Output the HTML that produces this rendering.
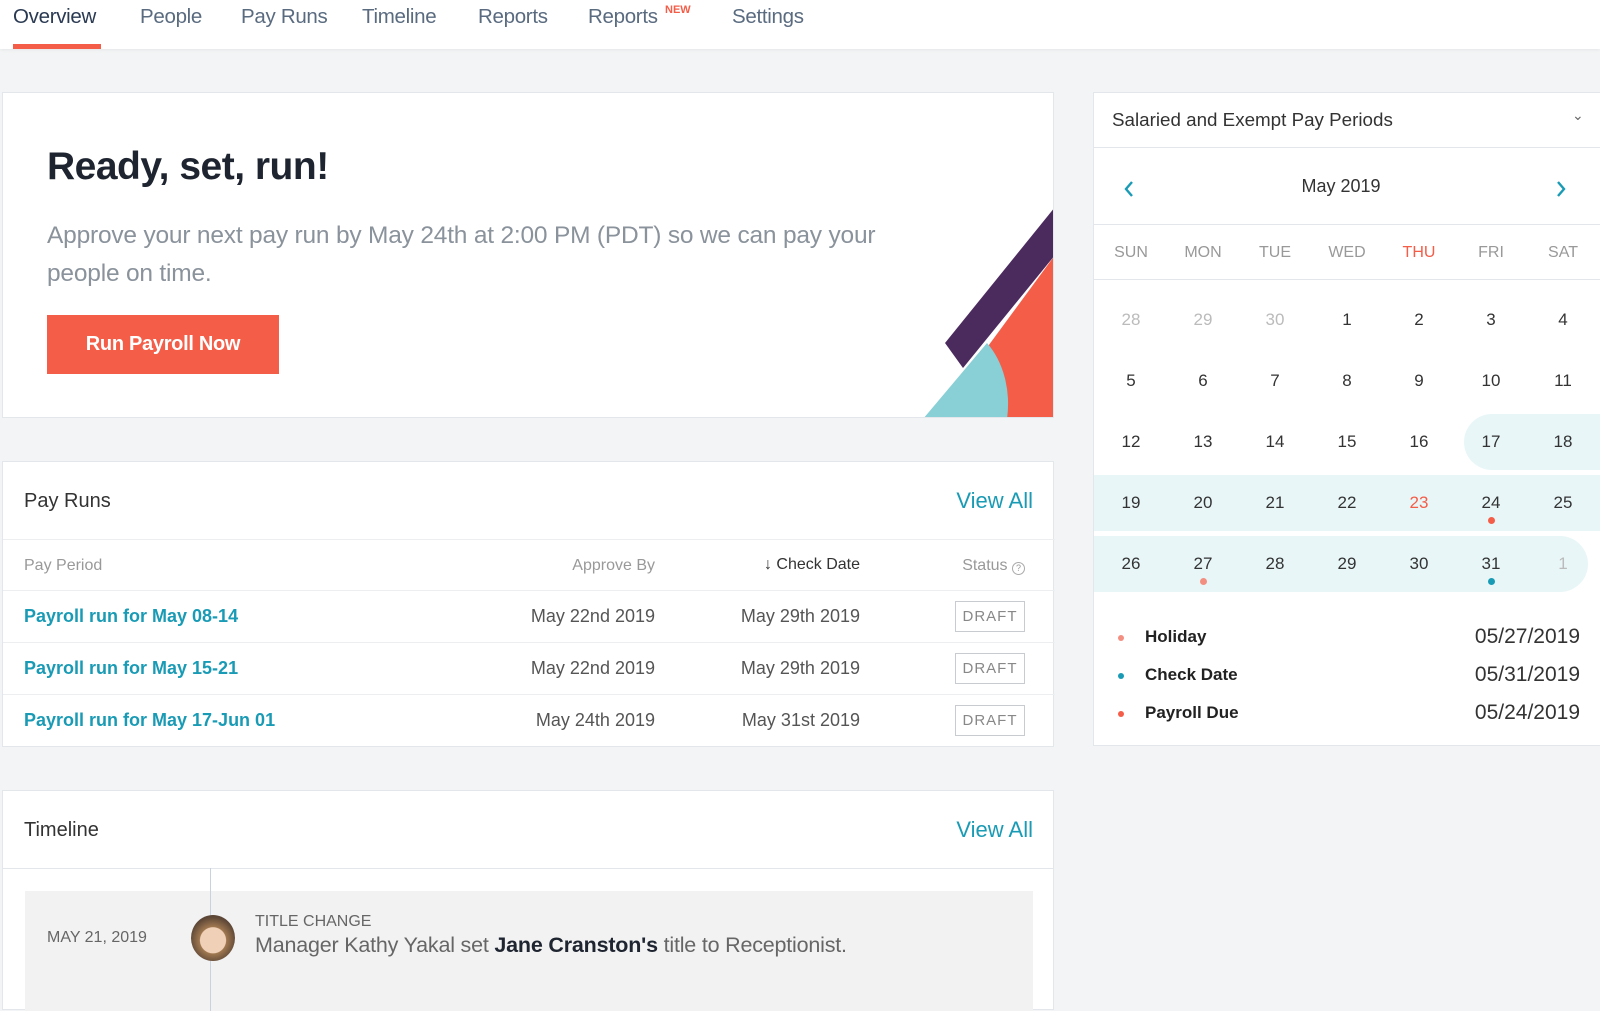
<!DOCTYPE html>
<html><head><meta charset="utf-8"><style>
*{margin:0;padding:0;box-sizing:border-box}
body{width:1600px;height:972px;overflow:hidden;background:#f3f4f5;font-family:"Liberation Sans",sans-serif;position:relative;color:#2b2d33}
.a{position:absolute;white-space:nowrap}
.nav{position:absolute;left:0;top:0;width:1600px;height:49px;background:#fff;box-shadow:0 1px 3px rgba(0,0,0,.06)}
.nav span{position:absolute;top:5px;font-size:20.5px;color:#5a6b80;letter-spacing:-.3px}
.card{position:absolute;background:#fff;border:1px solid #e3e6ea}
.teal{color:#1a9bb5}
.row{position:absolute;left:0;width:1052px;height:52px;border-top:1px solid #eceef0}
.row .a{top:15px;font-size:18px}
.draft{position:absolute;left:952px;top:10px;width:70px;height:31px;border:1px solid #c8ccd0;font-size:15px;color:#888;text-align:center;line-height:29px;letter-spacing:1px}
.cd{position:absolute;width:72px;text-align:center;font-size:17px;color:#333}
</style></head><body>
<div class="nav">
<span style="left:13px;color:#2a3a52">Overview</span>
<span style="left:140px">People</span>
<span style="left:241px">Pay Runs</span>
<span style="left:362px">Timeline</span>
<span style="left:478px">Reports</span>
<span style="left:588px">Reports</span><span style="left:665px;top:4px;font-size:11px;color:#f45d48;font-weight:bold;letter-spacing:0">NEW</span>
<span style="left:732px">Settings</span>
<div style="position:absolute;left:13px;top:44px;width:88px;height:5px;background:#f45d48"></div>
</div>

<div class="card" style="left:2px;top:92px;width:1052px;height:326px;overflow:hidden">
<div class="a" style="left:44px;top:52px;font-size:39px;font-weight:bold;color:#1f2530;letter-spacing:-.5px">Ready, set, run!</div>
<div class="a" style="left:44px;top:124px;font-size:24.5px;color:#8a929b;line-height:38px;letter-spacing:-.2px">Approve your next pay run by May 24th at 2:00 PM (PDT) so we can pay your<br>people on time.</div>
<div class="a" style="left:44px;top:222px;width:232px;height:59px;background:#f45d48;color:#fff;font-size:20px;font-weight:bold;text-align:center;line-height:59px;letter-spacing:-.3px">Run Payroll Now</div>
<svg class="a" style="left:900px;top:100px" width="152" height="226" viewBox="0 0 152 226">
<polygon points="152,62 152,226 100,226 80,160" fill="#f45d48"/>
<path d="M20,226 L84,150 A60,80 0 0 1 104,226 Z" fill="#88cfd6"/>
<polygon points="152,14 152,62 60,175 42,150" fill="#4b2a5e"/>
</svg>
</div>

<div class="card" style="left:2px;top:461px;width:1052px;height:286px">
<div class="a" style="left:21px;top:28px;font-size:20px;color:#333">Pay Runs</div>
<div class="a teal" style="right:20px;top:26px;font-size:22px">View All</div>
<div class="row" style="top:77px;height:51px">
<div class="a" style="left:21px;top:17px;font-size:16px;color:#999">Pay Period</div>
<div class="a" style="right:400px;top:17px;font-size:16px;color:#999">Approve By</div>
<div class="a" style="right:195px;top:16px;font-size:16px;color:#333">↓ Check Date</div>
<div class="a" style="right:30px;top:17px;font-size:16px;color:#999">Status <span style="display:inline-block;width:13px;height:13px;border:1px solid #aaa;border-radius:50%;font-size:9px;line-height:11px;text-align:center;vertical-align:-1px">?</span></div>
</div>
<div class="row" style="top:128px"><div class="a teal" style="left:21px;font-weight:bold">Payroll run for May 08-14</div><div class="a" style="right:400px;color:#555">May 22nd 2019</div><div class="a" style="right:195px;color:#555">May 29th 2019</div><div class="draft">DRAFT</div></div>
<div class="row" style="top:180px"><div class="a teal" style="left:21px;font-weight:bold">Payroll run for May 15-21</div><div class="a" style="right:400px;color:#555">May 22nd 2019</div><div class="a" style="right:195px;color:#555">May 29th 2019</div><div class="draft">DRAFT</div></div>
<div class="row" style="top:232px"><div class="a teal" style="left:21px;font-weight:bold">Payroll run for May 17-Jun 01</div><div class="a" style="right:400px;color:#555">May 24th 2019</div><div class="a" style="right:195px;color:#555">May 31st 2019</div><div class="draft">DRAFT</div></div>
</div>

<div class="card" style="left:2px;top:790px;width:1052px;height:220px">
<div class="a" style="left:21px;top:28px;font-size:20px;color:#333">Timeline</div>
<div class="a teal" style="right:20px;top:26px;font-size:22px">View All</div>
<div style="position:absolute;left:0;top:77px;width:1050px;border-top:1px solid #e3e6ea"></div>
<div style="position:absolute;left:22px;top:100px;width:1008px;height:120px;background:#f2f2f3"></div>
<div style="position:absolute;left:207px;top:77px;width:1px;height:143px;background:#c9d3e0"></div>
<div class="a" style="left:44px;top:138px;font-size:16px;color:#666">MAY 21, 2019</div>
<div class="a" style="left:188px;top:124px;width:44px;height:46px;border-radius:50%;background:radial-gradient(circle at 50% 55%,#f1d0b8 0 38%,#a07850 40%,#5c4636 70%)"></div>
<div class="a" style="left:252px;top:122px;font-size:16px;color:#666">TITLE CHANGE</div>
<div class="a" style="left:252px;top:142px;font-size:21.5px;color:#666;letter-spacing:-.2px">Manager Kathy Yakal set <b style="color:#1f2530">Jane Cranston's</b> title to Receptionist.</div>
</div>

<div class="card" style="left:1093px;top:92px;width:510px;height:654px">
<div class="a" style="left:18px;top:16px;font-size:18.8px;color:#333">Salaried and Exempt Pay Periods</div>
<div class="a" style="left:478px;top:14px;font-size:14px;color:#666">⌄</div>
<div style="position:absolute;left:0;top:54px;width:510px;border-top:1px solid #e3e6ea"></div>
<svg class="a" style="left:28px;top:86px" width="14" height="20" viewBox="0 0 14 20"><path d="M10 3 L4 10 L10 17" fill="none" stroke="#1a9bb5" stroke-width="2.4"/></svg>
<div class="a" style="left:0;width:494px;text-align:center;top:83px;font-size:18px;color:#333">May 2019</div>
<svg class="a" style="left:460px;top:86px" width="14" height="20" viewBox="0 0 14 20"><path d="M4 3 L10 10 L4 17" fill="none" stroke="#1a9bb5" stroke-width="2.4"/></svg>
<div style="position:absolute;left:0;top:131px;width:510px;border-top:1px solid #e3e6ea"></div>
<div style="position:absolute;left:0;top:186px;width:510px;border-top:1px solid #e3e6ea"></div>
<div style="position:absolute;left:370px;top:321px;width:140px;height:56px;background:#e8f6f8;border-radius:28px 0 0 28px"></div>
<div style="position:absolute;left:0;top:382px;width:510px;height:56px;background:#e8f6f8"></div>
<div style="position:absolute;left:0;top:443px;width:494px;height:56px;background:#e8f6f8;border-radius:0 28px 28px 0"></div>
<div id="cal"></div>
<div class="a" style="left:24px;top:542px;width:6px;height:6px;border-radius:50%;background:#f38f80"></div>
<div class="a" style="left:24px;top:580px;width:6px;height:6px;border-radius:50%;background:#1a9bb5"></div>
<div class="a" style="left:24px;top:618px;width:6px;height:6px;border-radius:50%;background:#f45d48"></div>
<div class="a" style="left:51px;top:534px;font-size:17px;font-weight:bold;color:#222">Holiday</div>
<div class="a" style="left:51px;top:572px;font-size:17px;font-weight:bold;color:#222">Check Date</div>
<div class="a" style="left:51px;top:610px;font-size:17px;font-weight:bold;color:#222">Payroll Due</div>
<div class="a" style="right:22px;top:532px;font-size:21px;color:#333">05/27/2019</div>
<div class="a" style="right:22px;top:570px;font-size:21px;color:#333">05/31/2019</div>
<div class="a" style="right:22px;top:608px;font-size:21px;color:#333">05/24/2019</div>
</div>
<script>
var c=document.getElementById('cal'),h='',x0=1;
var w=['SUN','MON','TUE','WED','THU','FRI','SAT'];
for(var i=0;i<7;i++)h+='<div class="cd" style="left:'+(x0+i*72)+'px;top:151px;font-size:16px;color:'+(i==4?'#f45d48':'#999')+'">'+w[i]+'</div>';
var d=[28,29,30];for(var i=1;i<=31;i++)d.push(i);d.push(1);
for(var k=0;k<35;k++){var r=Math.floor(k/7),col=k%7,v=d[k];var gray=(k<3||k==34);
var clr=gray?'#bbb':(v==23&&k>3?'#f45d48':'#333');
h+='<div class="cd" style="left:'+(x0+col*72)+'px;top:'+(217+r*61)+'px;color:'+clr+'">'+v+'</div>';}
h+='<div class="a" style="left:394px;top:424px;width:7px;height:7px;border-radius:50%;background:#f45d48"></div>';
h+='<div class="a" style="left:106px;top:485px;width:7px;height:7px;border-radius:50%;background:#f38f80"></div>';
h+='<div class="a" style="left:394px;top:485px;width:7px;height:7px;border-radius:50%;background:#1a9bb5"></div>';
c.innerHTML=h;
</script>
</body></html>
